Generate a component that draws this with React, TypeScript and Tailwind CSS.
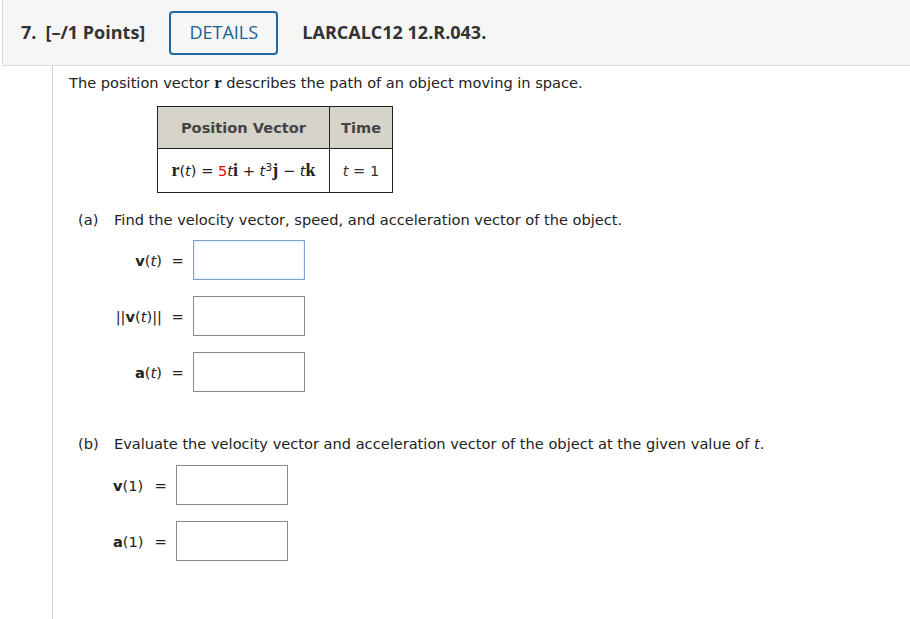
import React from 'react';

const serif = "font-['Liberation_Serif',serif]";

const InputBox: React.FC<{ focused?: boolean }> = ({ focused }) => (
  <div
    className={
      focused
        ? 'w-[112px] h-[40px] bg-white border border-[#7da2d3] shadow-[inset_0_0_3px_#c6daf3]'
        : 'w-[112px] h-[40px] bg-white border border-[#8a8a8a]'
    }
  />
);

const T: React.FC = () => <span className="italic">t</span>;

export default function App() {
  return (
    <div className="w-[910px] h-[619px] bg-white overflow-hidden text-[#222] font-['DejaVu_Sans',Verdana,sans-serif]">
      {/* header */}
      <div className="ml-[2px] h-[66px] bg-[#f6f6f6] border-l border-b border-[#dcdcdc] flex items-center pl-[18px] font-['Open_Sans',sans-serif] font-bold text-[18px] text-[#333]">
        <span>7.</span>
        <span className="ml-[9px]">[–/1 Points]</span>
        <div className="ml-[24px] w-[109px] h-[44px] border-2 border-[#1d6aa0] rounded-[4px] flex items-center justify-center text-[#1d5f92] font-medium">
          DETAILS
        </div>
        <span className="ml-[24px]">LARCALC12 12.R.043.</span>
      </div>

      <div className="flex h-[553px]">
        <div className="w-[53px] border-r border-[#d0d0d0] shrink-0" />
        <div className="pl-[16px] pt-[8px] text-[14.6px] leading-[17px]">
          <p>
            The position vector <span className={`font-bold ${serif} text-[17px]`}>r</span> describes the path of an object moving in space.
          </p>

          <table className="ml-[88px] mt-[15px] border-collapse border border-[#222]">
            <thead>
              <tr className="bg-[#d6d3ca] h-[42px]">
                <th className="w-[172px] border border-[#222] font-bold text-[#444]">Position Vector</th>
                <th className="w-[63px] border border-[#222] font-bold text-[#444]">Time</th>
              </tr>
            </thead>
            <tbody>
              <tr className="h-[44px] bg-white">
                <td className="border border-[#222] text-center whitespace-nowrap">
                  <span className={`font-bold ${serif} text-[18px]`}>r</span>(<T />) = <span className="text-[#e00]">5</span>
                  <T />
                  <span className={`font-bold ${serif} text-[18px]`}>i</span> + <T />
                  <sup className="text-[11px]">3</sup>
                  <span className={`font-bold ${serif} text-[18px]`}>j</span> − <T />
                  <span className={`font-bold ${serif} text-[18px]`}>k</span>
                </td>
                <td className="border border-[#222] text-center text-[#333]">
                  <T /> = 1
                </td>
              </tr>
            </tbody>
          </table>

          <div className="mt-[18px] flex">
            <span className="w-[45px] pl-[9px]">(a)</span>
            <span>Find the velocity vector, speed, and acceleration vector of the object.</span>
          </div>

          <div className="mt-[12px] flex flex-col gap-[16px]">
            <div className="flex items-center">
              <span className="w-[93px] text-right">
                <span className="font-bold">v</span>(<T />)
              </span>
              <span className="w-[31px] text-center">=</span>
              <InputBox focused />
            </div>
            <div className="flex items-center">
              <span className="w-[93px] text-right">
                ||<span className="font-bold">v</span>(<T />)||
              </span>
              <span className="w-[31px] text-center">=</span>
              <InputBox />
            </div>
            <div className="flex items-center">
              <span className="w-[93px] text-right">
                <span className="font-bold">a</span>(<T />)
              </span>
              <span className="w-[31px] text-center">=</span>
              <InputBox />
            </div>
          </div>

          <div className="mt-[43px] flex">
            <span className="w-[45px] pl-[9px]">(b)</span>
            <span>
              Evaluate the velocity vector and acceleration vector of the object at the given value of <T />.
            </span>
          </div>

          <div className="mt-[13px] flex flex-col gap-[16px] pl-[44px]">
            <div className="flex items-center">
              <span className="w-[32px]">
                <span className="font-bold">v</span>(1)
              </span>
              <span className="w-[31px] text-center">=</span>
              <InputBox />
            </div>
            <div className="flex items-center">
              <span className="w-[32px]">
                <span className="font-bold">a</span>(1)
              </span>
              <span className="w-[31px] text-center">=</span>
              <InputBox />
            </div>
          </div>
        </div>
      </div>
    </div>
  );
}
